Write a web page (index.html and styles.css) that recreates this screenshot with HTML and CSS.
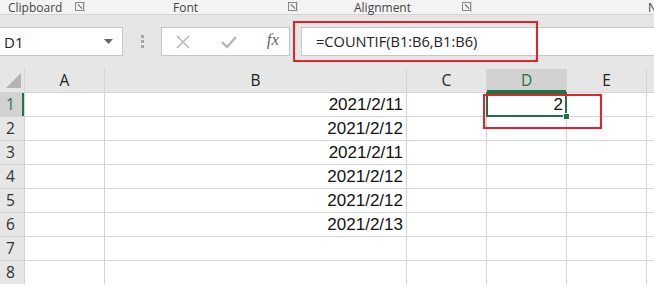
FILE: index.html
```html
<!DOCTYPE html>
<html lang="en">
<head>
    <meta charset="UTF-8">
    <title>Book1 - Excel</title>
    <link rel="stylesheet" href="styles.css">
</head>
<body>
    <div class="ribbon">
        <div class="group g-clip"><span>Clipboard</span><i class="launch"></i></div>
        <div class="group g-font"><span>Font</span><i class="launch"></i></div>
        <div class="group g-align"><span>Alignment</span><i class="launch"></i></div>
        <div class="group g-num"><span>N</span></div>
    </div>

    <div class="fbar">
        <div class="namebox">
            <span>D1</span>
            <svg width="9" height="5" viewBox="0 0 9 5"><path d="M0 0h9L4.5 5z" fill="#666"/></svg>
        </div>
        <div class="grip"><i></i><i></i><i></i></div>
        <div class="fbtns">
            <svg width="18" height="18" viewBox="0 0 18 18"><path d="M3 3l12 12M15 3L3 15" stroke="#b8b8b8" stroke-width="1.6" fill="none"/></svg>
            <svg width="20" height="18" viewBox="0 0 20 18"><path d="M3 9l5 5 9-10" stroke="#b8b8b8" stroke-width="2.4" fill="none"/></svg>
            <span class="fx">fx</span>
        </div>
        <div class="finput">=COUNTIF(B1:B6,B1:B6)</div>
        <div class="hl hl-formula"></div>
    </div>

    <div class="sheet">
        <div class="hd corner"><i></i></div>
        <div class="hd">A</div>
        <div class="hd">B</div>
        <div class="hd">C</div>
        <div class="hd sel-col">D</div>
        <div class="hd">E</div>
        <div class="hd"></div>
    </div>
    <div class="hl hl-cell"></div>

    <script>
        const dates = ['2021/2/11', '2021/2/12', '2021/2/11', '2021/2/12', '2021/2/12', '2021/2/13'];
        const sheet = document.querySelector('.sheet');
        for (let r = 1; r <= 8; r++) {
            let html = `<div class="rh${r === 1 ? ' sel-row' : ''}">${r}</div>`;
            html += '<div class="c"></div>';
            html += `<div class="c num">${dates[r - 1] || ''}</div>`;
            html += '<div class="c"></div>';
            html += r === 1 ? '<div class="c num active">2<b></b></div>' : '<div class="c"></div>';
            html += '<div class="c"></div><div class="c"></div>';
            sheet.insertAdjacentHTML('beforeend', html);
        }
    </script>
</body>
</html>
```

FILE: styles.css
```css
body { margin: 0; width: 654px; height: 288px; overflow: hidden; background: #fff; font-family: "Open Sans", "Liberation Sans", sans-serif; position: relative; }

.ribbon { height: 15px; box-sizing: border-box; padding-top: 1px; background: #f3f3f3; border-bottom: 1px solid #d4d4d4; display: flex; align-items: flex-start; font-size: 12px; color: #444; line-height: 13px; }
.group { display: flex; align-items: flex-start; height: 12px; border-right: 1px solid #d8d8d8; }
.g-clip { width: 85px; padding-left: 8px; box-sizing: border-box; }
.g-clip span { width: 68px; }
.g-font { width: 212px; }
.g-font span { margin-left: 88px; width: 115px; }
.g-align { width: 174px; }
.g-align span { margin-left: 56px; width: 108px; }
.g-num { border: none; margin-left: 176px; }
.launch { width: 7px; height: 7px; border: 1px solid #888; margin-top: 1px; position: relative; }
.launch::after { content: ""; position: absolute; left: 1px; top: 3px; width: 6px; height: 1px; background: #666; transform: rotate(45deg); }

.fbar { height: 54px; background: #e6e6e6; display: flex; align-items: flex-start; position: relative; }
.namebox { margin-top: 12px; width: 123px; height: 29px; box-sizing: border-box; background: #fff; border: 1px solid #c6c6c6; border-left: none; display: flex; align-items: center; justify-content: space-between; padding: 0 9px 0 4px; font-size: 15px; color: #222; }
.grip { width: 38px; display: flex; flex-direction: column; align-items: center; gap: 2px; margin-top: 20px; }
.grip i { width: 3px; height: 3px; background: #a6a6a6; }
.fbtns { margin-top: 12px; width: 129px; height: 29px; box-sizing: border-box; background: #fff; border: 1px solid #c6c6c6; display: flex; align-items: center; justify-content: space-between; padding: 0 10px 0 12px; }
.fx { font-family: "Liberation Serif", serif; font-style: italic; font-size: 17px; color: #666; margin-top: -3px; }
.finput { margin: 12px 0 0 11px; flex: 1; height: 29px; box-sizing: border-box; background: #fff; border: 1px solid #c6c6c6; border-right: none; font-size: 14.6px; color: #222; padding: 3px 0 0 14px; }

.hl { position: absolute; border: 2px solid #e8202a; box-sizing: border-box; pointer-events: none; }
.hl-formula { left: 293px; top: 6px; width: 245px; height: 41px; }
.hl-cell { left: 483px; top: 94px; width: 119px; height: 35px; }

.sheet { display: grid; grid-template-columns: 24px 79px 301px 79px 79px 79px 1fr; grid-template-rows: 23px; grid-auto-rows: 23px; gap: 1px; background: #d4d4d4; font-size: 16px; color: #111; }
.hd { background: #e6e6e6; text-align: center; font-size: 15.5px; line-height: 23px; color: #222; }
.corner { position: relative; }
.corner i { position: absolute; left: 6px; top: 4px; width: 0; height: 0; border-left: 15px solid transparent; border-bottom: 15px solid #b4b4b4; }
.sel-col { background: #d2d2d2; color: #217346; box-shadow: inset 0 -2px #217346; }
.rh { background: #e6e6e6; font-size: 15.5px; line-height: 23px; padding-left: 6px; color: #333; }
.sel-row { background: #d2d2d2; color: #217346; box-shadow: inset -2px 0 #217346; }
.c { background: #fff; line-height: 23px; }
.num { text-align: right; padding-right: 3px; font-family: "Liberation Sans", sans-serif; font-size: 17px; }
.active { position: relative; }
.active::before { content: ""; position: absolute; left: -1px; top: -1px; right: -1px; bottom: -1px; border: 2px solid #217346; }
.active b { position: absolute; right: -4px; bottom: -4px; width: 5px; height: 5px; background: #217346; border: 1px solid #fff; }
```
